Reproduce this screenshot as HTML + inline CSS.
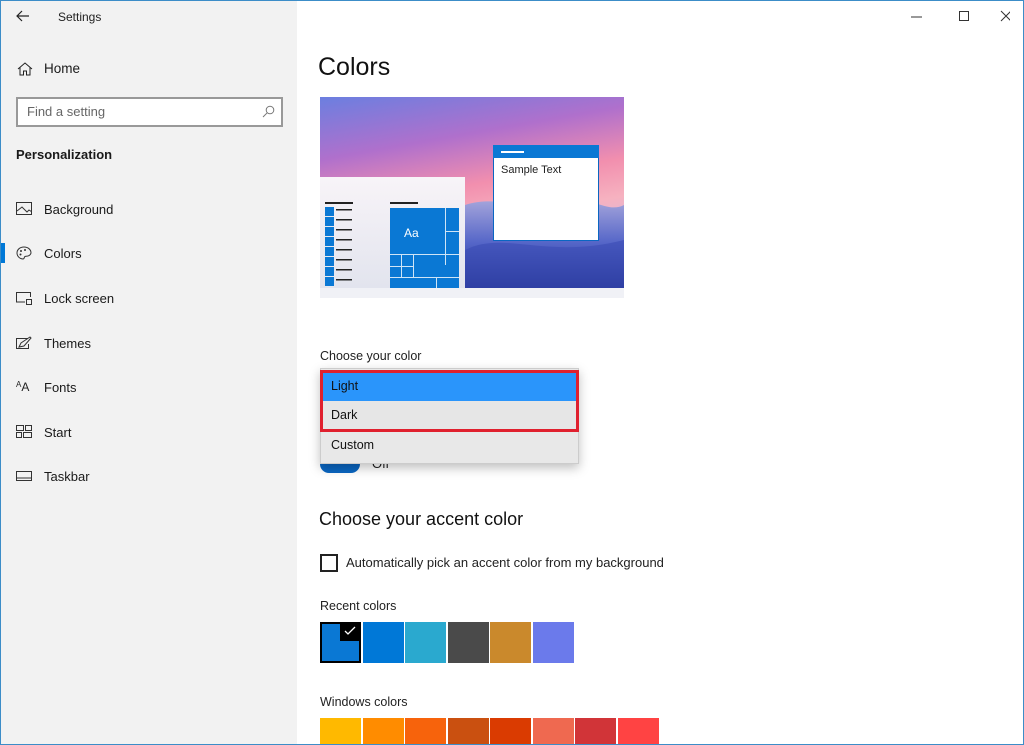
<!DOCTYPE html>
<html><head><style>
*{margin:0;padding:0;box-sizing:border-box}
html,body{width:1024px;height:745px;overflow:hidden}
body{font-family:"Liberation Sans",sans-serif;background:#fff;position:relative;color:#000}
.abs{position:absolute}
#side{left:0;top:0;width:297px;height:745px;background:#f2f2f2}
.nav{position:absolute;left:44px;font-size:13px;color:#1a1a1a}
.ic{position:absolute;left:16px;width:16px;height:14px}
.sw{position:absolute;width:41px;height:41px}
.ws{position:absolute;width:41px;height:26px;top:718px}
</style></head><body>
<div id="side" class="abs"></div>
<svg class="abs" style="left:16px;top:9px" width="14" height="14" viewBox="0 0 14 14"><path d="M13 7H1M6 2L1 7l5 5" stroke="#222" stroke-width="1.2" fill="none"/></svg>
<div class="abs" style="left:58px;top:10px;font-size:12px;color:#222">Settings</div>
<svg class="abs" style="left:910px;top:10px" width="100" height="14"><path d="M1 7h11" stroke="#333"/><rect x="49.5" y="1.5" width="9" height="9" fill="none" stroke="#333"/><path d="M91 1l10 10M101 1L91 11" stroke="#333"/></svg>
<svg class="abs" style="left:17px;top:62px" width="16" height="14" viewBox="0 0 16 14"><path d="M1 7L8 1l7 6M3 5.5V13h3.5V9h3v4H13V5.5" stroke="#222" fill="none"/></svg>
<div class="nav" style="top:61px;font-size:13.5px">Home</div>
<div class="abs" style="left:16px;top:97px;width:267px;height:30px;border:2px solid #999;background:#fff"></div>
<div class="abs" style="left:27px;top:104px;font-size:13px;color:#666">Find a setting</div>
<svg class="abs" style="left:262px;top:105px" width="13" height="13"><circle cx="8" cy="5" r="3.8" stroke="#777" fill="none"/><path d="M5.3 7.7L1 12" stroke="#777"/></svg>
<div class="abs" style="left:16px;top:147px;font-size:13px;font-weight:bold;color:#1a1a1a">Personalization</div>
<svg class="ic" style="top:202px" viewBox="0 0 16 14"><rect x=".5" y=".5" width="15" height="12" stroke="#333" fill="none"/><path d="M1 9l5-4 5 5 2-2 3 2" stroke="#333" fill="none"/></svg>
<div class="nav" style="top:202px">Background</div>
<div class="abs" style="left:1px;top:243px;width:4px;height:20px;background:#0078d7"></div>
<svg class="ic" style="top:246px" viewBox="0 0 16 14"><path d="M8 1C4 1 1 3.5 1 7s3 6 6 6c1.5 0 1-2 2-2.5S14 11 15 7C15 3.5 12 1 8 1z" stroke="#333" fill="none"/><circle cx="5" cy="5" r="1" fill="#333"/><circle cx="9" cy="4" r="1" fill="#333"/><circle cx="4.5" cy="8.5" r="1" fill="#333"/></svg>
<div class="nav" style="top:246px">Colors</div>
<svg class="ic" style="top:291px" viewBox="0 0 16 14"><path d="M9 11H.5V1.5h14V6" stroke="#333" fill="none"/><rect x="10.5" y="8.5" width="5" height="5" stroke="#333" fill="none"/></svg>
<div class="nav" style="top:291px">Lock screen</div>
<svg class="ic" style="top:336px" viewBox="0 0 16 14"><path d="M12 2.5H.5v10h12V8" stroke="#333" fill="none"/><path d="M3 11l2-4 9-6 1 1-7 8z" stroke="#333" fill="none"/></svg>
<div class="nav" style="top:336px">Themes</div>
<div class="abs" style="left:16px;top:380px;font-size:12px;color:#222"><span style="font-size:8px;vertical-align:4px">A</span>A</div>
<div class="nav" style="top:380px">Fonts</div>
<svg class="ic" style="top:425px" viewBox="0 0 16 14"><rect x=".5" y=".5" width="7" height="5" stroke="#333" fill="none"/><rect x="9.5" y=".5" width="6" height="5" stroke="#333" fill="none"/><rect x=".5" y="7.5" width="5" height="5" stroke="#333" fill="none"/><rect x="7.5" y="7.5" width="8" height="5" stroke="#333" fill="none"/></svg>
<div class="nav" style="top:425px">Start</div>
<svg class="ic" style="top:469px" viewBox="0 0 16 14"><rect x=".5" y="2.5" width="15" height="9" stroke="#333" fill="none"/><path d="M1 9h14" stroke="#333"/></svg>
<div class="nav" style="top:469px">Taskbar</div>

<div class="abs" style="left:318px;top:53px;font-size:25px;color:#111">Colors</div>
<!-- preview -->
<div class="abs" style="left:320px;top:97px;width:304px;height:201px;background:linear-gradient(170deg,#6b7fe0 0%,#b070cc 25%,#f28fae 45%,#f6b2c0 60%,#c9b8e8 80%)"></div>
<svg class="abs" style="left:465px;top:190px" width="159" height="98" viewBox="0 0 159 98"><defs><linearGradient id="g" x1="0" y1="0" x2="0" y2="1"><stop offset="0" stop-color="#a9a8dc"/><stop offset=".5" stop-color="#5566c8"/><stop offset="1" stop-color="#1e2f8c"/></linearGradient></defs><path d="M0 15C30 5 60 20 90 10S140 25 159 15V98H0z" fill="url(#g)"/><path d="M0 60C40 40 80 70 159 50V98H0z" fill="#3a4bb4" opacity=".6"/></svg>
<div class="abs" style="left:320px;top:177px;width:145px;height:111px;background:linear-gradient(180deg,#f8f4f8,#e2e4ee)"></div>
<div class="abs" style="left:320px;top:288px;width:304px;height:10px;background:#f0f1f6"></div>
<div class="abs" style="left:325px;top:202px;width:28px;height:2px;background:#222"></div>
<div class="abs" style="left:325px;top:207px;width:9px;height:80px;background:repeating-linear-gradient(180deg,#0a78d4 0 9px,#e6e9f0 9px 10px)"></div>
<div class="abs" style="left:336px;top:209px;width:16px;height:78px;background:repeating-linear-gradient(180deg,#222 0 1.5px,transparent 1.5px 10px)"></div>
<div class="abs" style="left:390px;top:202px;width:28px;height:2px;background:#222"></div>
<div class="abs" style="left:390px;top:208px;width:69px;height:80px;background:#0a78d4"></div>
<div class="abs" style="left:445px;top:208px;width:1px;height:57px;background:#cfe4f6"></div>
<div class="abs" style="left:445px;top:231px;width:14px;height:1px;background:#cfe4f6"></div>
<div class="abs" style="left:390px;top:254px;width:69px;height:1px;background:#cfe4f6"></div>
<div class="abs" style="left:390px;top:277px;width:69px;height:1px;background:#cfe4f6"></div>
<div class="abs" style="left:401px;top:254px;width:1px;height:24px;background:#cfe4f6"></div>
<div class="abs" style="left:413px;top:254px;width:1px;height:24px;background:#cfe4f6"></div>
<div class="abs" style="left:390px;top:266px;width:23px;height:1px;background:#cfe4f6"></div>
<div class="abs" style="left:436px;top:277px;width:1px;height:11px;background:#cfe4f6"></div>
<div class="abs" style="left:404px;top:226px;font-size:12px;color:#fff">Aa</div>
<div class="abs" style="left:493px;top:145px;width:106px;height:96px;background:#fff;border:1px solid #0a66c2"></div>
<div class="abs" style="left:493px;top:145px;width:106px;height:13px;background:#0a78d4"></div>
<div class="abs" style="left:501px;top:151px;width:23px;height:2px;background:#fff"></div>
<div class="abs" style="left:501px;top:164px;font-size:11px;color:#222">Sample Text</div>

<div class="abs" style="left:320px;top:349px;font-size:12.5px;color:#222">Choose your color</div>
<div class="abs" style="left:320px;top:455px;width:40px;height:18px;background:#0a66c2;border-radius:9px"></div>
<div class="abs" style="left:372px;top:456px;font-size:13px;color:#222">Off</div>
<div class="abs" style="left:320px;top:368px;width:259px;height:96px;background:#e8e8e8;box-shadow:0 4px 10px rgba(0,0,0,.25);border:1px solid #ccc"></div>
<div class="abs" style="left:321px;top:372px;width:256px;height:29px;background:#2a95fb"></div>
<div class="abs" style="left:321px;top:401px;width:256px;height:29px;background:#e6e6e6"></div>
<div class="abs" style="left:320px;top:370px;width:259px;height:62px;border:3px solid #e0202e"></div>
<div class="abs" style="left:331px;top:379px;font-size:12.5px;color:#111">Light</div>
<div class="abs" style="left:331px;top:408px;font-size:12.5px;color:#111">Dark</div>
<div class="abs" style="left:331px;top:438px;font-size:12.5px;color:#111">Custom</div>

<div class="abs" style="left:319px;top:509px;font-size:18px;color:#111">Choose your accent color</div>
<div class="abs" style="left:320px;top:554px;width:18px;height:18px;border:2px solid #222"></div>
<div class="abs" style="left:346px;top:555px;font-size:13px;color:#222">Automatically pick an accent color from my background</div>
<div class="abs" style="left:320px;top:599px;font-size:12.5px;color:#222">Recent colors</div>
<div class="sw" style="left:320px;top:622px;background:#0a78d4;border:2px solid #000"></div>
<div class="abs" style="left:340px;top:622px;width:21px;height:19px;background:#000"></div>
<svg class="abs" style="left:343px;top:625px" width="14" height="12"><path d="M2 6l3 3 7-7" stroke="#fff" stroke-width="1.3" fill="none"/></svg>
<div class="sw" style="left:363px;top:622px;background:#0078d7"></div>
<div class="sw" style="left:405px;top:622px;background:#2aa9cf"></div>
<div class="sw" style="left:448px;top:622px;background:#4a4a4a"></div>
<div class="sw" style="left:490px;top:622px;background:#ca892c"></div>
<div class="sw" style="left:533px;top:622px;background:#6b7aeb"></div>
<div class="abs" style="left:320px;top:695px;font-size:12.5px;color:#222">Windows colors</div>
<div class="ws" style="left:320px;background:#ffb900"></div>
<div class="ws" style="left:363px;background:#ff8c00"></div>
<div class="ws" style="left:405px;background:#f7630c"></div>
<div class="ws" style="left:448px;background:#ca5010"></div>
<div class="ws" style="left:490px;background:#da3b01"></div>
<div class="ws" style="left:533px;background:#ef6950"></div>
<div class="ws" style="left:575px;background:#d13438"></div>
<div class="ws" style="left:618px;background:#ff4343"></div>
<div class="abs" style="left:0;top:0;width:1024px;height:1px;background:#3c8dc8"></div>
<div class="abs" style="left:0;top:0;width:1px;height:745px;background:#3c8dc8"></div>
<div class="abs" style="left:1023px;top:0;width:1px;height:745px;background:#3c8dc8"></div>
<div class="abs" style="left:0;top:744px;width:1024px;height:1px;background:#3c8dc8"></div>
</body></html>
